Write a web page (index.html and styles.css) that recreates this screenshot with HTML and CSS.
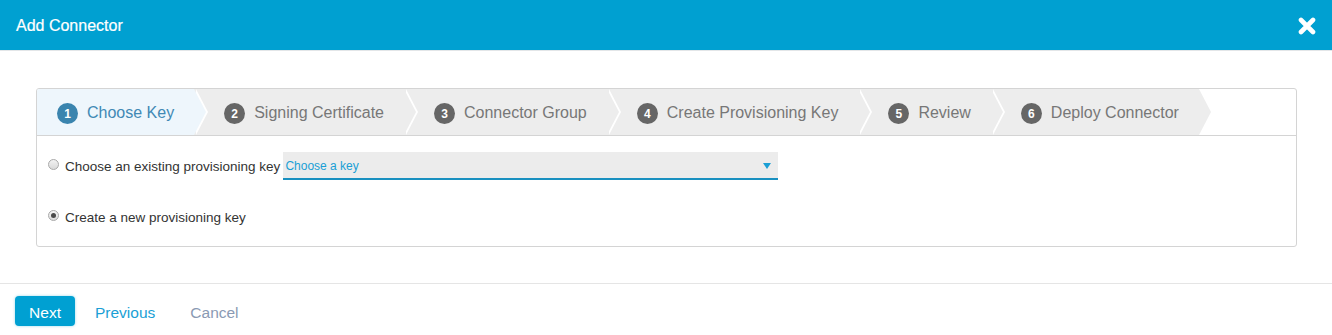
FILE: index.html
```html
<!DOCTYPE html>
<html lang="en">
<head>
<meta charset="utf-8">
<title>Add Connector</title>
<link rel="stylesheet" href="styles.css">
</head>
<body>
<div class="modal">
  <header class="modal-header">
    <h1 class="modal-title">Add Connector</h1>
    <span class="close" aria-label="Close">
      <svg width="18" height="18" viewBox="0 0 18 18"><path d="M3 3 L15 15 M15 3 L3 15" stroke="#fff" stroke-width="4.6" stroke-linecap="round"/></svg>
    </span>
  </header>
  <div class="modal-body">
    <div class="wizard">
      <ol class="steps">
        <li class="step active"><span class="num">1</span>Choose Key</li>
        <li class="step"><span class="num">2</span>Signing Certificate</li>
        <li class="step"><span class="num">3</span>Connector Group</li>
        <li class="step"><span class="num">4</span>Create Provisioning Key</li>
        <li class="step"><span class="num">5</span>Review</li>
        <li class="step"><span class="num">6</span>Deploy Connector</li>
      </ol>
      <div class="wizard-content">
        <div class="option option-select">
          <span class="radio"></span>
          <span class="label">Choose an existing provisioning key</span>
          <div class="select"><span class="select-text">Choose a key</span><span class="caret"></span></div>
        </div>
        <div class="option">
          <span class="radio checked"></span>
          <span class="label">Create a new provisioning key</span>
        </div>
      </div>
    </div>
  </div>
  <footer class="modal-footer">
    <button class="btn-primary">Next</button>
    <a class="link">Previous</a>
    <a class="link muted">Cancel</a>
  </footer>
</div>
</body>
</html>
```

FILE: styles.css
```css
* { box-sizing: border-box; }
html, body { margin: 0; padding: 0; background: #fff; }
body { font-family: "Liberation Sans", Arial, Helvetica, sans-serif; color: #333; width: 1332px; height: 335px; overflow: hidden; }

.modal-header {
  height: 51px;
  background: #00a0d1;
  border-bottom: 1px solid #e3e6e8;
  display: flex;
  align-items: center;
  justify-content: space-between;
  padding: 0 16px 0 16px;
}
.modal-title { margin: 0; font-size: 16px; font-weight: normal; color: #fff; padding-top: 2px; -webkit-text-stroke: 0.2px #fff; }
.close { display: flex; width: 18px; height: 18px; margin-top: 2px; }

.modal-body { padding: 37px 35px 36px 36px; border-bottom: 1px solid #e5e5e5; }

.wizard { border: 1px solid #d4d4d4; border-radius: 3px; }

.steps {
  list-style: none;
  margin: 0;
  padding: 0;
  display: flex;
  height: 47px;
  border-bottom: 1px solid #d4d4d4;
}
.step {
  position: relative;
  display: flex;
  align-items: center;
  height: 46px;
  padding: 2px 20px 0 30px;
  background: #ededed;
  color: #777;
  font-size: 16px;
  white-space: nowrap;
}
.step.active { background: #eef6fc; color: #4189b5; padding-left: 20px; border-top-left-radius: 2px; }
.step::before, .step::after {
  content: "";
  position: absolute;
  top: 0;
  width: 0; height: 0;
  border-top: 23px solid transparent;
  border-bottom: 23px solid transparent;
}
.step::before { right: -14px; border-left: 12px solid #fff; z-index: 1; }
.step::after { right: -12px; border-left: 12px solid #ededed; z-index: 2; }
.step.active::after { border-left-color: #eef6fc; }

.num {
  width: 21px; height: 21px;
  border-radius: 50%;
  background: #666;
  color: #fff;
  font-size: 12px;
  font-weight: bold;
  display: flex; align-items: center; justify-content: center;
  margin-right: 9px;
  flex: none;
  padding-top: 1px;
}
.step.active .num { background: #3a84ae; }

.wizard-content { padding: 16px 11px 20px 11px; display: flex; flex-direction: column; gap: 28px; }
.option { display: flex; align-items: center; font-size: 13.5px; color: #333; }
.option-select { height: 28px; }
.radio {
  width: 11px; height: 11px;
  border-radius: 50%;
  border: 1px solid #a9a9a9;
  background: linear-gradient(#f2f2f2, #d9d9d9);
  margin-right: 6px;
  flex: none;
  display: flex; align-items: center; justify-content: center;
  margin-top: -3px;
}
.radio.checked { background: linear-gradient(#f5f5f5, #dcdcdc); }
.radio.checked::after { content: ""; width: 5px; height: 5px; border-radius: 50%; background: #4a4a4a; }
.label { line-height: 16px; padding-top: 2px; }

.select {
  margin-left: 3px;
  width: 495px;
  height: 28px;
  background: #ececec;
  border-bottom: 2px solid #1990c0;
  display: flex;
  align-items: center;
  justify-content: space-between;
  padding: 2px 7px 0 2px;
  color: #1a9fd5;
  font-size: 12px;
}
.caret { width: 0; height: 0; border-left: 4.5px solid transparent; border-right: 4.5px solid transparent; border-top: 6px solid #1a9fd5; }

.modal-footer { display: flex; align-items: center; padding: 12px 15px 0 15px; }
.btn-primary {
  height: 30px;
  width: 60px;
  border: none;
  border-radius: 4px;
  background: #00a0d2;
  color: #fff;
  font-family: inherit;
  font-size: 15.5px;
  padding: 4px 0 0 0;
  box-shadow: 0 0 3px rgba(0,160,210,0.4);
}
.link { font-size: 15.5px; color: #1a9fd5; margin-left: 20px; padding-top: 4px; }
.link.muted { color: #8a9ab3; margin-left: 35px; }
```
